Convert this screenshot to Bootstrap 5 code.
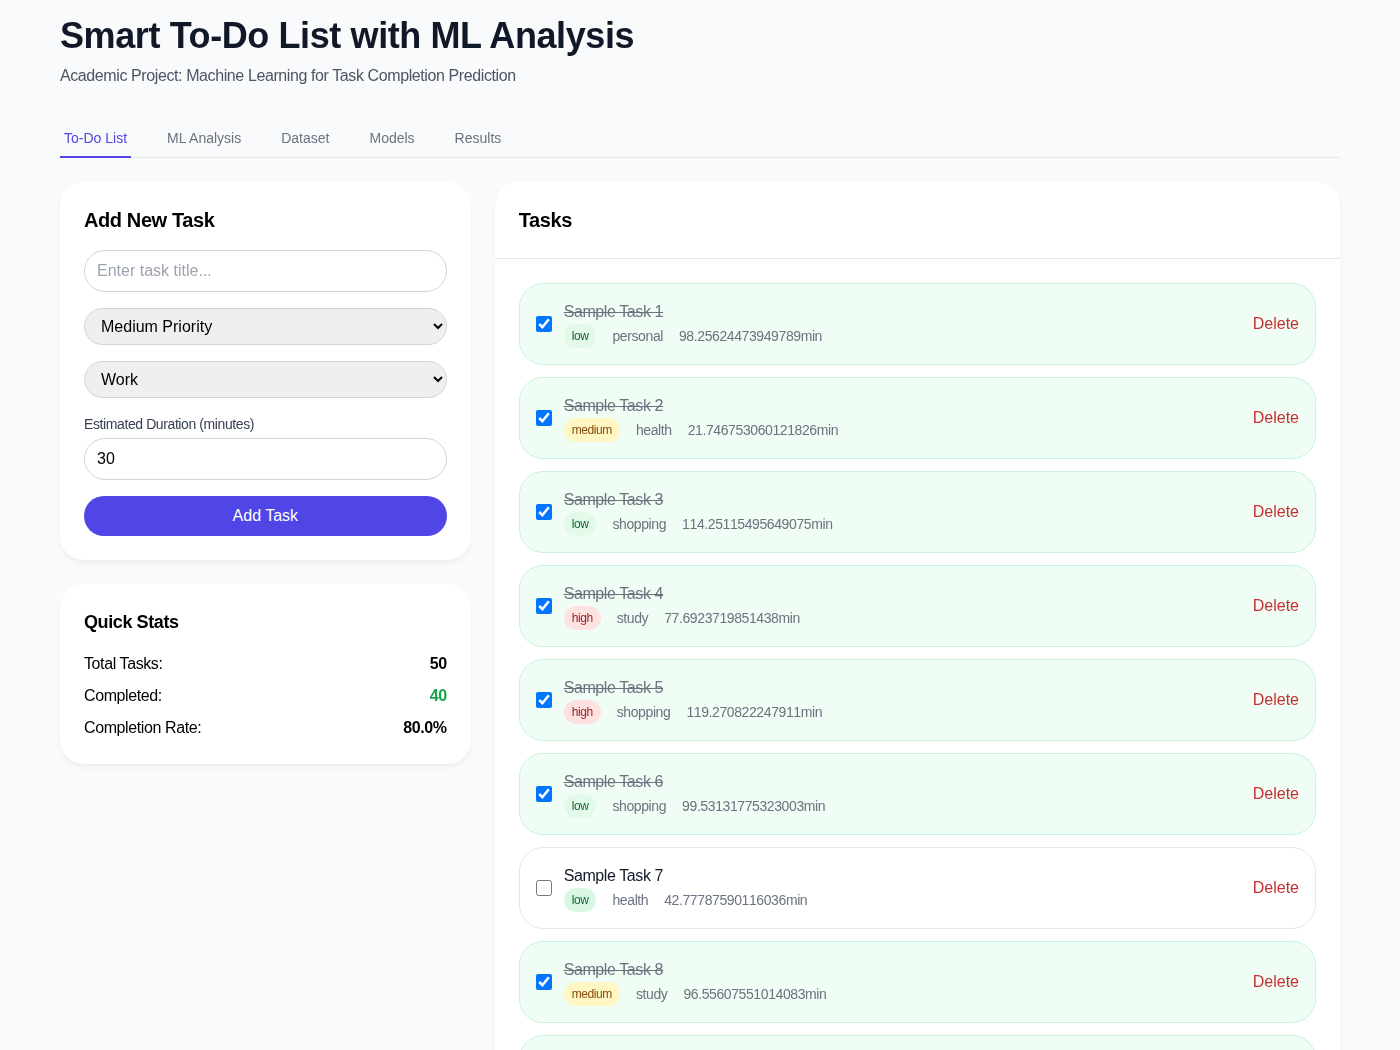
<!DOCTYPE html>
<html lang="en">
<head>
    <meta charset="UTF-8">
    <meta name="viewport" content="width=device-width, initial-scale=1.0">
    <title>Smart To-Do List with ML Analysis</title>
    <link href="https://cdn.jsdelivr.net/npm/bootstrap@5.3.0/dist/css/bootstrap.min.css" rel="stylesheet">
    <style>
        body { background: #f9fafb; font-family: "Liberation Sans", Arial, sans-serif; font-size: 16px; line-height: 24px; letter-spacing: -0.4px; color: #000; }
        .page-wrap { padding: 16px 60px 24px; will-change: opacity; }
        .page-title { font-size: 36px; line-height: 40px; font-weight: 700; letter-spacing: -0.4px; color: #111827; margin: 0 0 8px; }
        .page-sub { color: #4b5563; margin: 0 0 40px; }

        .tab-bar { border-bottom: 1px solid #e5e7eb; gap: 32px; margin-bottom: 24px; height: 30px; }
        .tab-bar .nav-link { font-size: 14px; line-height: 20px; letter-spacing: 0; color: #6b7280; padding: 0 4px 8px; height: 30px; border-bottom: 2px solid transparent; }
        .tab-bar .nav-link.active { color: #4f46e5; border-bottom-color: #4f46e5; }

        .layout-grid { display: grid; grid-template-columns: repeat(3, minmax(0, 1fr)); gap: 24px; align-items: start; }
        .right-col { grid-column: span 2; }
        .panel { background: #fff; border: 0; border-radius: 24px; box-shadow: 0 4px 6px -1px rgba(0, 0, 0, .05), 0 2px 4px -2px rgba(0, 0, 0, .04), 0 0 2px rgba(0, 0, 0, .02); }
        .panel-title { font-size: 20px; line-height: 28px; font-weight: 700; margin: 0; }
        .stats-title { font-size: 18px; line-height: 28px; font-weight: 700; margin: 0 0 16px; }

        .field { height: 42px; border: 1px solid #d1d5db; border-radius: 21px; padding: 8px 12px; font-size: 16px; line-height: 24px; letter-spacing: 0; color: #000; }
        .field::placeholder { color: #9ca3af; }
        .native-select { display: block; width: 100%; height: 37px; padding: 0 12px; border: 1px solid #d1d5db; border-radius: 19px; background-color: #efefef; font-size: 16px; letter-spacing: 0; color: #000; }
        .field-label { display: block; font-size: 14px; line-height: 20px; color: #374151; margin-bottom: 4px; }
        .add-btn { height: 40px; border-radius: 20px; background: #4f46e5; border: 0; color: #fff; font-size: 16px; line-height: 24px; letter-spacing: 0; }
        .add-btn:hover { background: #4338ca; color: #fff; }

        .stat-value { font-weight: 700; }
        .stat-green { color: #16a34a; }

        .panel-head { padding: 24px; border-bottom: 1px solid #e5e7eb; }
        .task-list { gap: 12px; }
        .task-item { height: 82px; padding: 16px; border: 1px solid #e5e7eb; border-radius: 24px; background: #fff; }
        .task-item.done { background: #f0fdf4; border-color: #c8f2dc; }
        .task-check { width: 16px; height: 16px; margin: 0 12px 0 0; flex: none; }
        .task-name { line-height: 24px; color: #111827; }
        .done .task-name { color: #6b7280; text-decoration: line-through; }
        .task-meta { font-size: 14px; line-height: 24px; color: #6b7280; gap: 16px; font-kerning: none; }
        .pill { font-size: 12px; line-height: 16px; padding: 4px 8px; border-radius: 12px; }
        .pill-low { background: #d9f7e4; color: #166534; }
        .done .pill-low { background: #e3f9ea; }
        .pill-medium { background: #fef6c3; color: #854d0e; }
        .pill-high { background: #fee2e2; color: #991b1b; }
        .del-btn { color: #c53030; font-size: 16px; line-height: 24px; letter-spacing: 0; padding: 0; border: 0; background: none; }
    </style>
</head>
<body>
    <div class="page-wrap">
        <h1 class="page-title">Smart To-Do List with ML Analysis</h1>
        <p class="page-sub">Academic Project: Machine Learning for Task Completion Prediction</p>

        <ul class="nav tab-bar">
            <li class="nav-item"><a class="nav-link active" href="#">To-Do List</a></li>
            <li class="nav-item"><a class="nav-link" href="#">ML Analysis</a></li>
            <li class="nav-item"><a class="nav-link" href="#">Dataset</a></li>
            <li class="nav-item"><a class="nav-link" href="#">Models</a></li>
            <li class="nav-item"><a class="nav-link" href="#">Results</a></li>
        </ul>

        <div class="layout-grid">
            <div class="d-flex flex-column gap-4">
                <div class="card panel">
                    <div class="card-body p-4">
                        <h2 class="panel-title mb-3">Add New Task</h2>
                        <form class="d-flex flex-column gap-3" onsubmit="event.preventDefault()">
                            <input type="text" class="form-control field" placeholder="Enter task title...">
                            <select class="native-select">
                                <option>Medium Priority</option>
                                <option>Low Priority</option>
                                <option>High Priority</option>
                            </select>
                            <select class="native-select">
                                <option>Work</option>
                                <option>Personal</option>
                                <option>Health</option>
                                <option>Shopping</option>
                                <option>Study</option>
                            </select>
                            <div>
                                <label class="field-label" for="duration">Estimated Duration (minutes)</label>
                                <input type="number" id="duration" class="form-control field" value="30">
                            </div>
                            <button type="submit" class="btn add-btn w-100 p-0">Add Task</button>
                        </form>
                    </div>
                </div>

                <div class="card panel">
                    <div class="card-body p-4">
                        <h3 class="stats-title">Quick Stats</h3>
                        <div class="d-flex flex-column gap-2">
                            <div class="d-flex justify-content-between"><span>Total Tasks:</span><span class="stat-value">50</span></div>
                            <div class="d-flex justify-content-between"><span>Completed:</span><span class="stat-value stat-green">40</span></div>
                            <div class="d-flex justify-content-between"><span>Completion Rate:</span><span class="stat-value">80.0%</span></div>
                        </div>
                    </div>
                </div>
            </div>

            <div class="right-col">
                <div class="card panel">
                    <div class="panel-head">
                        <h2 class="panel-title">Tasks</h2>
                    </div>
                    <div class="card-body p-4 d-flex flex-column task-list">
                        <div class="task-item done d-flex align-items-center">
                            <input class="task-check" type="checkbox" checked>
                            <div class="flex-grow-1">
                                <div class="task-name">Sample Task 1</div>
                                <div class="task-meta d-flex align-items-center"><span class="pill pill-low">low</span><span>personal</span><span>98.25624473949789min</span></div>
                            </div>
                            <button class="del-btn">Delete</button>
                        </div>
                        <div class="task-item done d-flex align-items-center">
                            <input class="task-check" type="checkbox" checked>
                            <div class="flex-grow-1">
                                <div class="task-name">Sample Task 2</div>
                                <div class="task-meta d-flex align-items-center"><span class="pill pill-medium">medium</span><span>health</span><span>21.746753060121826min</span></div>
                            </div>
                            <button class="del-btn">Delete</button>
                        </div>
                        <div class="task-item done d-flex align-items-center">
                            <input class="task-check" type="checkbox" checked>
                            <div class="flex-grow-1">
                                <div class="task-name">Sample Task 3</div>
                                <div class="task-meta d-flex align-items-center"><span class="pill pill-low">low</span><span>shopping</span><span>114.25115495649075min</span></div>
                            </div>
                            <button class="del-btn">Delete</button>
                        </div>
                        <div class="task-item done d-flex align-items-center">
                            <input class="task-check" type="checkbox" checked>
                            <div class="flex-grow-1">
                                <div class="task-name">Sample Task 4</div>
                                <div class="task-meta d-flex align-items-center"><span class="pill pill-high">high</span><span>study</span><span>77.6923719851438min</span></div>
                            </div>
                            <button class="del-btn">Delete</button>
                        </div>
                        <div class="task-item done d-flex align-items-center">
                            <input class="task-check" type="checkbox" checked>
                            <div class="flex-grow-1">
                                <div class="task-name">Sample Task 5</div>
                                <div class="task-meta d-flex align-items-center"><span class="pill pill-high">high</span><span>shopping</span><span>119.270822247911min</span></div>
                            </div>
                            <button class="del-btn">Delete</button>
                        </div>
                        <div class="task-item done d-flex align-items-center">
                            <input class="task-check" type="checkbox" checked>
                            <div class="flex-grow-1">
                                <div class="task-name">Sample Task 6</div>
                                <div class="task-meta d-flex align-items-center"><span class="pill pill-low">low</span><span>shopping</span><span>99.53131775323003min</span></div>
                            </div>
                            <button class="del-btn">Delete</button>
                        </div>
                        <div class="task-item d-flex align-items-center">
                            <input class="task-check" type="checkbox">
                            <div class="flex-grow-1">
                                <div class="task-name">Sample Task 7</div>
                                <div class="task-meta d-flex align-items-center"><span class="pill pill-low">low</span><span>health</span><span>42.77787590116036min</span></div>
                            </div>
                            <button class="del-btn">Delete</button>
                        </div>
                        <div class="task-item done d-flex align-items-center">
                            <input class="task-check" type="checkbox" checked>
                            <div class="flex-grow-1">
                                <div class="task-name">Sample Task 8</div>
                                <div class="task-meta d-flex align-items-center"><span class="pill pill-medium">medium</span><span>study</span><span>96.55607551014083min</span></div>
                            </div>
                            <button class="del-btn">Delete</button>
                        </div>
                        <div class="task-item done d-flex align-items-center">
                            <input class="task-check" type="checkbox" checked>
                            <div class="flex-grow-1">
                                <div class="task-name">Sample Task 9</div>
                                <div class="task-meta d-flex align-items-center"><span class="pill pill-low">low</span><span>health</span><span>64.31205718842913min</span></div>
                            </div>
                            <button class="del-btn">Delete</button>
                        </div>
                    </div>
                </div>
            </div>
        </div>
    </div>
    <script src="https://cdn.jsdelivr.net/npm/bootstrap@5.3.0/dist/js/bootstrap.bundle.min.js"></script>
</body>
</html>
